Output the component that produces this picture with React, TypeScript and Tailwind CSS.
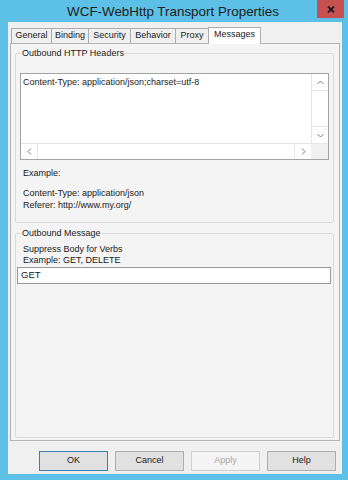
import React from "react";

function Chev({ dir }: { dir: "up" | "down" | "left" | "right" }) {
  const pts =
    dir === "up"
      ? "0.5,4 3.5,1 6.5,4"
      : dir === "down"
      ? "0.5,1 3.5,4 6.5,1"
      : dir === "left"
      ? "4,0.5 1,3.5 4,6.5"
      : "1,0.5 4,3.5 1,6.5";
  const w = dir === "up" || dir === "down" ? 7 : 5;
  const h = dir === "up" || dir === "down" ? 5 : 7;
  return (
    <svg width={w} height={h} viewBox={`0 0 ${w} ${h}`}>
      <polyline points={pts} fill="none" stroke="#7a7a7a" strokeWidth="1" />
    </svg>
  );
}

function Tab({ label, selected, first, w }: { label: string; selected?: boolean; first?: boolean; w: string }) {
  if (selected) {
    return (
      <div
        className={`-ml-[1px] h-[17px] ${w} border border-b-0 border-[#acacac] bg-white flex items-center justify-center pb-[2px] text-[9px] text-[#1a1a1a]`}
      >
        {label}
      </div>
    );
  }
  return (
    <div
      className={`${first ? "" : "-ml-[1px]"} mb-[1px] h-[15px] ${w} border border-b-0 border-[#acacac] bg-[#f0f0f0] flex items-center justify-center text-[9px] text-[#1a1a1a]`}
    >
      {label}
    </div>
  );
}

export default function App() {
  return (
    <div className="w-[348px] h-[480px] bg-[#5cc0e7] flex flex-col font-['Liberation_Sans',Arial,sans-serif] text-[#1a1a1a] overflow-hidden">
      {/* Title bar */}
      <div className="relative h-[22px] shrink-0 flex items-center justify-center">
        <span className="text-[13.4px] leading-[15px] text-[#202020] pt-[1px] ml-[-2px]">WCF-WebHttp Transport Properties</span>
        <div className="absolute right-[4px] top-0 w-[27px] h-[18px] bg-[#c75050] flex items-center justify-center">
          <svg width="8" height="7" viewBox="0 0 8 7">
            <path d="M1 0.5 L7 6.5 M7 0.5 L1 6.5" stroke="#1c1c1c" strokeWidth="1.8" />
          </svg>
        </div>
      </div>

      {/* Client */}
      <div className="ml-[8px] mr-[6px] mb-[6px] flex-1 bg-[#f0f0f0] flex flex-col">
        {/* Tabs */}
        <div className="mt-[5px] ml-[3px] h-[17px] flex items-end relative z-10 -mb-[1px]">
          <Tab label="General" first w="w-[41px]" />
          <Tab label="Binding" w="w-[38px]" />
          <Tab label="Security" w="w-[43px]" />
          <Tab label="Behavior" w="w-[46px]" />
          <Tab label="Proxy" w="w-[34px]" />
          <Tab label="Messages" selected w="w-[53px]" />
        </div>

        {/* Panel */}
        <div className="ml-[2px] w-[330px] h-[398px] border border-[#b4b4b4] bg-[#f4f4f4] flex flex-col">
          <fieldset className="ml-[4px] mt-[4px] w-[319px] h-[175px] border border-[#dadada] rounded-[2px] flex flex-col">
            <legend className="ml-[5px] px-[1px] text-[9px] leading-[11px]">Outbound HTTP Headers</legend>
            {/* text area */}
            <div className="mt-[14px] ml-[4px] w-[309px] h-[87px] border border-[#a3a3a3] bg-white flex flex-col">
              <div className="flex flex-1 min-h-0">
                <div className="flex-1 pl-[2px] pt-[3px] text-[9px] leading-[11px]">
                  Content-Type: application/json;charset=utf-8
                </div>
                <div className="w-[17px] flex flex-col border-l border-[#e6e6e6]">
                  <div className="h-[17px] flex items-center justify-center border-b border-[#e6e6e6]">
                    <Chev dir="up" />
                  </div>
                  <div className="flex-1" />
                  <div className="h-[17px] flex items-center justify-center border-t border-[#e6e6e6]">
                    <Chev dir="down" />
                  </div>
                </div>
              </div>
              <div className="h-[16px] flex border-t border-[#e6e6e6]">
                <div className="flex-1 flex justify-between">
                  <div className="w-[17px] flex items-center justify-center border-r border-[#e6e6e6]">
                    <Chev dir="left" />
                  </div>
                  <div className="w-[17px] flex items-center justify-center border-l border-[#e6e6e6]">
                    <Chev dir="right" />
                  </div>
                </div>
                <div className="w-[17px] bg-[#f0f0f0]" />
              </div>
            </div>
            <div className="mt-[7px] ml-[7px] text-[9px] leading-[12px]">Example:</div>
            <div className="mt-[8px] ml-[7px] text-[9px] leading-[12px]">
              <div>Content-Type: application/json</div>
              <div>Referer: http://www.my.org/</div>
            </div>
          </fieldset>

          <fieldset className="ml-[4px] mt-[5px] w-[319px] h-[210px] border border-[#dadada] rounded-[2px] flex flex-col">
            <legend className="ml-[5px] px-[1px] text-[9px] leading-[11px]">Outbound Message</legend>
            <div className="mt-[5px] ml-[7px] text-[9px] leading-[11px]">
              <div>Suppress Body for Verbs</div>
              <div>Example: GET, DELETE</div>
            </div>
            <div className="mt-[1px] ml-[1px] w-[314px] h-[17px] border border-[#9a9a9a] bg-white flex items-center pl-[3px] text-[9.5px]">
              GET
            </div>
          </fieldset>
        </div>

        {/* Buttons */}
        <div className="mt-[10px] ml-[31px] flex gap-[7px]">
          <div className="w-[69px] h-[20px] border border-[#3c7fb1] bg-[#e1e1e1] flex items-center justify-center text-[9px]">
            OK
          </div>
          <div className="w-[69px] h-[20px] border border-[#adadad] bg-[#e1e1e1] flex items-center justify-center text-[9px]">
            Cancel
          </div>
          <div className="w-[69px] h-[20px] border border-[#cfcfcf] bg-[#f4f4f4] flex items-center justify-center text-[9px] text-[#a8a8a8]">
            Apply
          </div>
          <div className="w-[69px] h-[20px] border border-[#adadad] bg-[#e1e1e1] flex items-center justify-center text-[9px]">
            Help
          </div>
        </div>
      </div>
    </div>
  );
}
